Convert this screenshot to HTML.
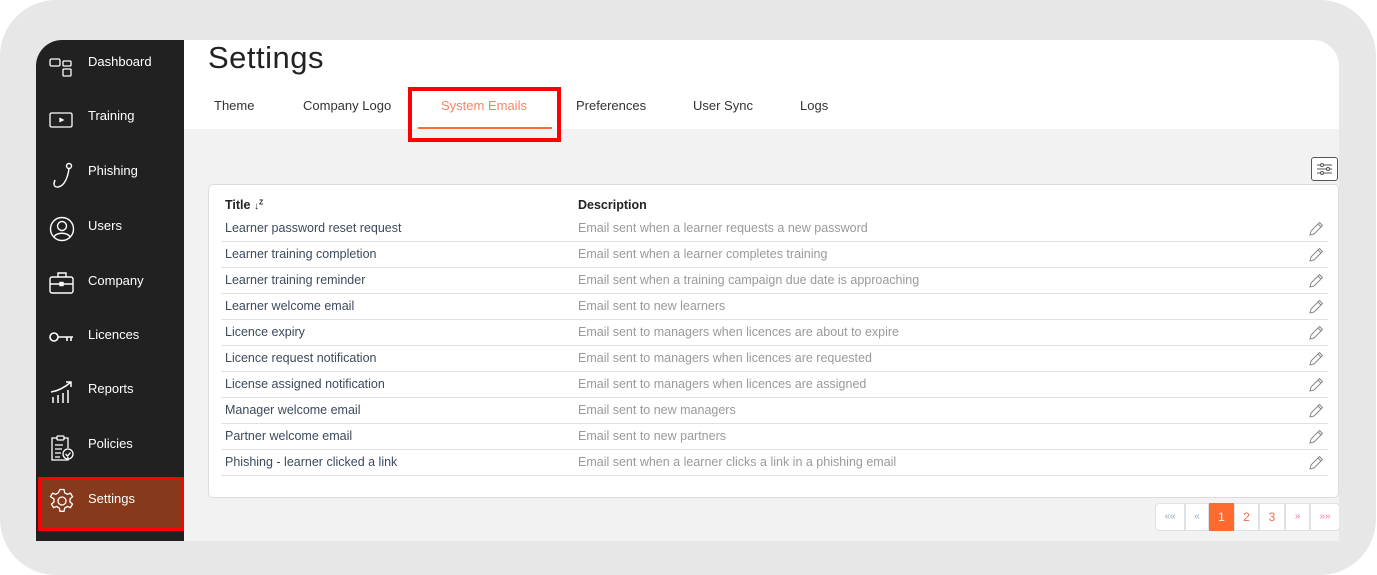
<!DOCTYPE html>
<html><head><meta charset="utf-8"><style>
*{margin:0;padding:0;box-sizing:border-box}
body{width:1377px;height:575px;background:#fff;font-family:"Liberation Sans",sans-serif;position:relative;overflow:hidden}
.outer{position:absolute;left:0;top:0;width:1376px;height:575px;background:#e7e7e7;border-radius:56px}
.inner{position:absolute;left:36px;top:40px;width:1303px;height:501px;background:#f2f2f2;border-radius:26px 26px 0 0;overflow:hidden}
.side{position:absolute;left:0;top:0;width:148px;height:501px;background:#212121}
.top{position:absolute;left:148px;top:0;right:0;height:89px;background:#fff}
.nav{position:absolute;left:52px;color:#fff;font-size:13px}
.ic{position:absolute;left:13px}
.abs{position:absolute}
h1{position:absolute;left:172px;top:0px;font-size:31px;font-weight:normal;color:#222;letter-spacing:.5px}
.tab{position:absolute;top:58px;font-size:13px;color:#333}
.card{position:absolute;left:172px;top:144px;width:1131px;height:314px;background:#fff;border:1px solid #dcdcdc;border-radius:5px}
.row{position:absolute;left:12px;width:1107px;height:26px;border-bottom:1px solid #dde2e6;font-size:12.5px}
.row .t{position:absolute;left:4px;top:5px;color:#3d4a5c}
.row .d{position:absolute;left:357px;top:5px;color:#9a9a9a}
.row svg{position:absolute;right:4px;top:5px}
.pg{position:absolute;top:463px;height:28px;border:1px solid #dde2e6;background:#fff;font-size:12px;color:#f07050;text-align:center;line-height:26px}
</style></head><body>
<div class="outer"></div>
<div class="inner">
<div class="side">
 <svg class="ic" style="top:17px" width="24" height="20" viewBox="0 0 24 20" fill="none" stroke="#fff" stroke-width="1.3"><rect x="1" y="2" width="10" height="7" rx="1.5"/><rect x="14" y="4" width="8" height="5" rx="1"/><rect x="14" y="12" width="8" height="7" rx="1"/></svg>
 <div class="nav" style="top:14px">Dashboard</div>
 <svg class="ic" style="top:71px" width="24" height="18" viewBox="0 0 24 18" fill="none" stroke="#fff" stroke-width="1.3"><rect x="1" y="2" width="22" height="14" rx="1.5"/><path d="M11 7.5l3 1.5-3 1.5z" fill="#fff"/></svg>
 <div class="nav" style="top:68px">Training</div>
 <svg class="ic" style="top:122px" width="24" height="28" viewBox="0 0 24 28" fill="none" stroke="#fff" stroke-width="1.4"><circle cx="20" cy="4" r="2.5"/><path d="M20 6.5C19 14 16 24 9 25C5 25.5 4 22 6 18M6 18l-1 4"/></svg>
 <div class="nav" style="top:123px">Phishing</div>
 <svg class="ic" style="top:176px" width="26" height="26" viewBox="0 0 26 26" fill="none" stroke="#fff" stroke-width="1.4"><circle cx="13" cy="13" r="11.5"/><circle cx="13" cy="10" r="4.5"/><path d="M5 21c2-5 14-5 16 0"/></svg>
 <div class="nav" style="top:178px">Users</div>
 <svg class="ic" style="top:231px" width="26" height="24" viewBox="0 0 26 24" fill="none" stroke="#fff" stroke-width="1.4"><rect x="1" y="6" width="23" height="16" rx="2"/><path d="M9 6V2h8v4M1 13h23"/><rect x="11" y="11.5" width="3" height="3" fill="#fff"/></svg>
 <div class="nav" style="top:233px">Company</div>
 <svg class="ic" style="top:291px" width="26" height="14" viewBox="0 0 26 14" fill="none" stroke="#fff" stroke-width="1.6"><circle cx="5" cy="6" r="4"/><path d="M9 6h15M18 6v4M22 6v4"/></svg>
 <div class="nav" style="top:287px">Licences</div>
 <svg class="ic" style="top:340px" width="26" height="26" viewBox="0 0 26 26" fill="none" stroke="#fff" stroke-width="1.5"><path d="M2 12C9 11 15 8 22 2M17 2h5v5M4 17v6M9 15v8M14 13v10M19 10v13"/></svg>
 <div class="nav" style="top:341px">Reports</div>
 <svg class="ic" style="top:394px" width="26" height="28" viewBox="0 0 26 28" fill="none" stroke="#fff" stroke-width="1.3"><path d="M8 4H3v22h16v-3M15 4h4v10"/><rect x="8" y="2" width="7" height="4" rx="1"/><path d="M6 11h8M6 15h7M6 19h6M6 23h5"/><circle cx="19" cy="20" r="5"/><path d="M16.5 20l2 2 3-3.5"/></svg>
 <div class="nav" style="top:396px">Policies</div>
 <div class="abs" style="left:2px;top:437px;width:146px;height:54px;background:#87391b;border:3px solid #f00"></div>
 <svg class="ic" style="top:448px" width="26" height="26" viewBox="0 0 26 26" fill="none" stroke="#fff" stroke-width="1.3"><circle cx="13" cy="13" r="4"/><path d="M11 1.5h4l.7 3.3 2.6 1.5 3.2-1.1 2 3.5-2.5 2.2v3l2.5 2.2-2 3.5-3.2-1.1-2.6 1.5-.7 3.3h-4l-.7-3.3-2.6-1.5-3.2 1.1-2-3.5 2.5-2.2v-3L1.5 8.7l2-3.5 3.2 1.1 2.6-1.5z"/></svg>
 <div class="nav" style="top:451px">Settings</div>
</div>
<div class="top"></div>
<h1>Settings</h1>
<div class="tab" style="left:178px">Theme</div>
<div class="tab" style="left:267px">Company Logo</div>
<div class="tab" style="left:405px;color:#f58466">System Emails</div>
<div class="abs" style="left:382px;top:87px;width:134px;height:2px;background:#ff6a35"></div>
<div class="abs" style="left:372px;top:47px;width:153px;height:55px;border:4px solid #f00"></div>
<div class="tab" style="left:540px">Preferences</div>
<div class="tab" style="left:657px">User Sync</div>
<div class="tab" style="left:764px">Logs</div>
<div class="abs" style="left:1275px;top:117px;width:27px;height:24px;border:1px solid #555;border-radius:3px;background:#fff"><svg width="25" height="22" viewBox="0 0 25 22" fill="none" stroke="#555" stroke-width="1"><path d="M5 7h15M5 11h15M5 15h15"/><circle cx="10" cy="7" r="1.5" fill="#fff"/><circle cx="16" cy="11" r="1.5" fill="#fff"/><circle cx="10" cy="15" r="1.5" fill="#fff"/></svg></div>
<div class="card">
 <div class="abs" style="left:16px;top:13px;font-size:12.5px;font-weight:bold;color:#222">Title <span style="font-size:10px">↓<sup style="font-size:7px">Z</sup></span></div>
 <div class="abs" style="left:369px;top:13px;font-size:12.5px;font-weight:bold;color:#222">Description</div>
 <!-- rows -->
 <div class="row" style="top:31px"><span class="t">Learner password reset request</span><span class="d">Email sent when a learner requests a new password</span><svg width="16" height="16" viewBox="0 0 16 16" fill="none" stroke="#888" stroke-width="1"><path d="M2 14l1-4L11.5 1.5l3 3L6 13zM10 3l3 3"/></svg></div>
 <div class="row" style="top:57px"><span class="t">Learner training completion</span><span class="d">Email sent when a learner completes training</span><svg width="16" height="16" viewBox="0 0 16 16" fill="none" stroke="#888" stroke-width="1"><path d="M2 14l1-4L11.5 1.5l3 3L6 13zM10 3l3 3"/></svg></div>
 <div class="row" style="top:83px"><span class="t">Learner training reminder</span><span class="d">Email sent when a training campaign due date is approaching</span><svg width="16" height="16" viewBox="0 0 16 16" fill="none" stroke="#888" stroke-width="1"><path d="M2 14l1-4L11.5 1.5l3 3L6 13zM10 3l3 3"/></svg></div>
 <div class="row" style="top:109px"><span class="t">Learner welcome email</span><span class="d">Email sent to new learners</span><svg width="16" height="16" viewBox="0 0 16 16" fill="none" stroke="#888" stroke-width="1"><path d="M2 14l1-4L11.5 1.5l3 3L6 13zM10 3l3 3"/></svg></div>
 <div class="row" style="top:135px"><span class="t">Licence expiry</span><span class="d">Email sent to managers when licences are about to expire</span><svg width="16" height="16" viewBox="0 0 16 16" fill="none" stroke="#888" stroke-width="1"><path d="M2 14l1-4L11.5 1.5l3 3L6 13zM10 3l3 3"/></svg></div>
 <div class="row" style="top:161px"><span class="t">Licence request notification</span><span class="d">Email sent to managers when licences are requested</span><svg width="16" height="16" viewBox="0 0 16 16" fill="none" stroke="#888" stroke-width="1"><path d="M2 14l1-4L11.5 1.5l3 3L6 13zM10 3l3 3"/></svg></div>
 <div class="row" style="top:187px"><span class="t">License assigned notification</span><span class="d">Email sent to managers when licences are assigned</span><svg width="16" height="16" viewBox="0 0 16 16" fill="none" stroke="#888" stroke-width="1"><path d="M2 14l1-4L11.5 1.5l3 3L6 13zM10 3l3 3"/></svg></div>
 <div class="row" style="top:213px"><span class="t">Manager welcome email</span><span class="d">Email sent to new managers</span><svg width="16" height="16" viewBox="0 0 16 16" fill="none" stroke="#888" stroke-width="1"><path d="M2 14l1-4L11.5 1.5l3 3L6 13zM10 3l3 3"/></svg></div>
 <div class="row" style="top:239px"><span class="t">Partner welcome email</span><span class="d">Email sent to new partners</span><svg width="16" height="16" viewBox="0 0 16 16" fill="none" stroke="#888" stroke-width="1"><path d="M2 14l1-4L11.5 1.5l3 3L6 13zM10 3l3 3"/></svg></div>
 <div class="row" style="top:265px"><span class="t">Phishing - learner clicked a link</span><span class="d">Email sent when a learner clicks a link in a phishing email</span><svg width="16" height="16" viewBox="0 0 16 16" fill="none" stroke="#888" stroke-width="1"><path d="M2 14l1-4L11.5 1.5l3 3L6 13zM10 3l3 3"/></svg></div>
</div>
<div class="pg" style="left:1119px;width:30px;border-radius:4px 0 0 4px;color:#9ab;font-size:10px">««</div>
<div class="pg" style="left:1149px;width:24px;color:#9ab;font-size:10px">«</div>
<div class="pg" style="left:1173px;width:25px;background:#ff6a2f;border-color:#ff6a2f;color:#fff">1</div>
<div class="pg" style="left:1198px;width:25px">2</div>
<div class="pg" style="left:1223px;width:26px">3</div>
<div class="pg" style="left:1249px;width:25px;font-size:10px;color:#f7a">»</div>
<div class="pg" style="left:1274px;width:30px;font-size:10px;color:#f7a;border-radius:0 4px 4px 0">»»</div>
</div>
</body></html>
